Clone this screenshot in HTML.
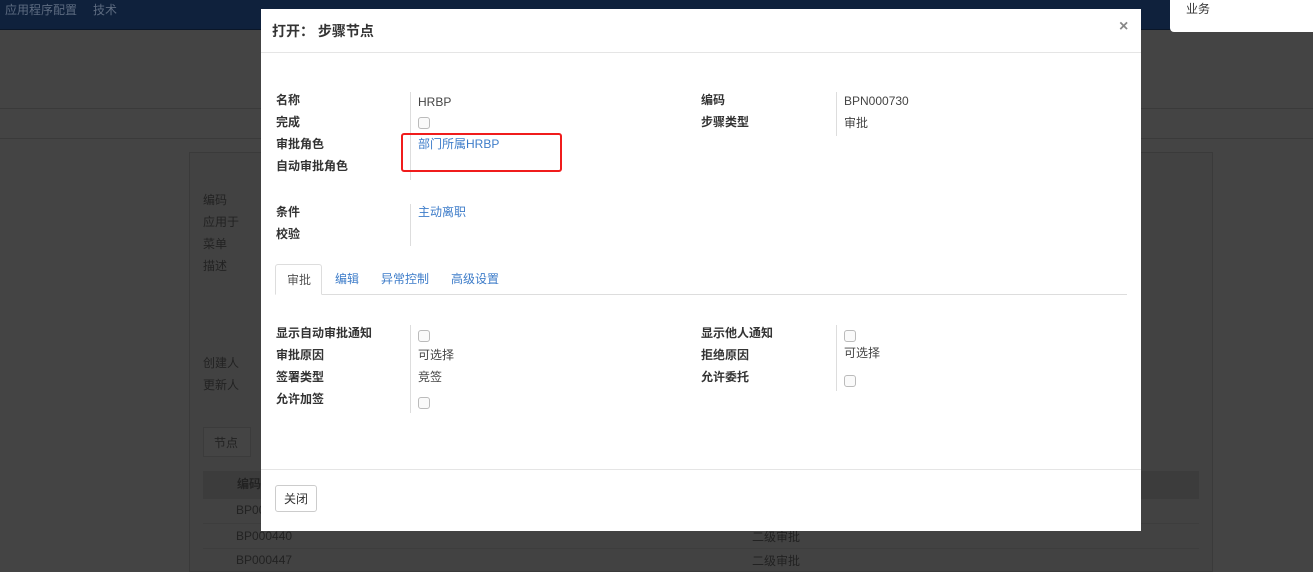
<!DOCTYPE html>
<html><head><meta charset="utf-8"><style>
*{box-sizing:border-box;margin:0;padding:0}
body{width:1313px;height:561px;overflow:hidden;background:#444;font-family:"Liberation Sans","Noto Sans CJK SC",sans-serif;font-size:12px;color:#333;position:relative}
.a{position:absolute}
.nav{left:0;top:0;width:1313px;height:30px;background:#0f213c;border-bottom:1px solid #0a1628}
.nav span{position:absolute;top:1px;color:#5d6b80;font-size:12px}
.m{left:261px;top:9px;width:880px;height:522px;background:#fff}
.lbl{font-weight:bold;color:#333}
.v{color:#444}
.lnk{color:#3d7cc9}
.cb{width:12px;height:12px;border:1px solid #bbb;border-radius:3px;background:#fafafa}
.sep{width:1px;background:#ddd}
.dk{color:#222}
</style></head><body>
<div class="a nav"><span style="left:5px">应用程序配置</span><span style="left:93px">技术</span></div>
<div class="a" style="left:1170px;top:0;width:143px;height:32px;background:#fff;border-radius:0 0 0 4px"><span class="a" style="left:16px;top:0px;color:#333">业务</span></div>
<div class="a" style="left:0;top:108px;width:1313px;height:1px;background:#3a3a3a"></div>
<div class="a" style="left:0;top:138px;width:1313px;height:1px;background:#3a3a3a"></div>
<div class="a" style="left:189px;top:152px;width:1024px;height:420px;background:#424242;border:1px solid #3a3a3a"></div>
<div class="a dk" style="left:203px;top:189px;line-height:22px">编码<br>应用于<br>菜单<br>描述</div>
<div class="a dk" style="left:203px;top:352px;line-height:22px">创建人<br>更新人</div>
<div class="a" style="left:203px;top:427px;width:48px;height:30px;border:1px solid #3b3b3b;background:#444"><span class="a dk" style="left:10px;top:6px">节点</span></div>
<div class="a" style="left:203px;top:471px;width:996px;height:28px;background:#3c3c3c"><span class="a dk" style="left:34px;top:4px;font-weight:bold">编码</span></div>
<div class="a" style="left:203px;top:523px;width:996px;height:1px;background:#3d3d3d"></div>
<div class="a" style="left:203px;top:548px;width:996px;height:1px;background:#3d3d3d"></div>
<div class="a dk" style="left:236px;top:503px">BP00</div>
<div class="a dk" style="left:236px;top:529px">BP000440</div>
<div class="a dk" style="left:236px;top:553px">BP000447</div>
<div class="a dk" style="left:752px;top:528px">二级审批</div>
<div class="a dk" style="left:752px;top:552px">二级审批</div>

<div class="a m">
 <div class="a" style="left:11px;top:12px;font-size:14px;font-weight:bold;color:#333">打开： 步骤节点</div>
 <div class="a" style="left:858px;top:9px;font-size:16px;font-weight:bold;color:#888">×</div>
 <div class="a" style="left:0;top:43px;width:880px;height:1px;background:#e5e5e5"></div>
 <div class="a lbl" style="left:15px;top:80px;line-height:22px">名称<br>完成<br>审批角色<br>自动审批角色</div>
 <div class="a sep" style="left:149px;top:83px;height:88px"></div>
 <div class="a v" style="left:157px;top:82px;line-height:22px">HRBP</div>
 <div class="a cb" style="left:157px;top:108px"></div>
 <div class="a lnk" style="left:157px;top:124px;line-height:22px">部门所属HRBP</div>
 <div class="a" style="left:140px;top:124px;width:161px;height:39px;border:2px solid #f01c1c;border-radius:3px"></div>
 <div class="a lbl" style="left:440px;top:80px;line-height:22px">编码<br>步骤类型</div>
 <div class="a sep" style="left:575px;top:83px;height:44px"></div>
 <div class="a v" style="left:583px;top:81px;line-height:22px">BPN000730<br>审批</div>
 <div class="a lbl" style="left:15px;top:195px;line-height:22px;margin-top:-3px">条件<br>校验</div>
 <div class="a sep" style="left:149px;top:195px;height:42px"></div>
 <div class="a lnk" style="left:157px;top:192px;line-height:22px">主动离职</div>
 <div class="a" style="left:14px;top:285px;width:852px;height:1px;background:#ddd"></div>
 <div class="a" style="left:14px;top:255px;width:47px;height:31px;border:1px solid #ddd;border-bottom:1px solid #fff;border-radius:3px 3px 0 0;background:#fff"><span class="a" style="left:11px;top:6px;color:#555">审批</span></div>
 <div class="a lnk" style="left:74px;top:261px">编辑</div>
 <div class="a lnk" style="left:120px;top:261px">异常控制</div>
 <div class="a lnk" style="left:190px;top:261px">高级设置</div>
 <div class="a lbl" style="left:15px;top:313px;line-height:22px">显示自动审批通知<br>审批原因<br>签署类型<br>允许加签</div>
 <div class="a sep" style="left:149px;top:316px;height:88px"></div>
 <div class="a cb" style="left:157px;top:321px"></div>
 <div class="a v" style="left:157px;top:335px;line-height:22px">可选择<br>竞签</div>
 <div class="a cb" style="left:157px;top:388px"></div>
 <div class="a lbl" style="left:440px;top:313px;line-height:22px">显示他人通知<br>拒绝原因<br>允许委托</div>
 <div class="a sep" style="left:575px;top:316px;height:66px"></div>
 <div class="a cb" style="left:583px;top:321px"></div>
 <div class="a v" style="left:583px;top:338px;margin-top:-3px">可选择</div>
 <div class="a cb" style="left:583px;top:366px"></div>
 <div class="a" style="left:0;top:460px;width:880px;height:1px;background:#e5e5e5"></div>
 <div class="a" style="left:14px;top:476px;width:42px;height:27px;border:1px solid #ccc;border-radius:3px;background:#fff"><span class="a" style="left:8px;top:4px;color:#333">关闭</span></div>
</div>
</body></html>
